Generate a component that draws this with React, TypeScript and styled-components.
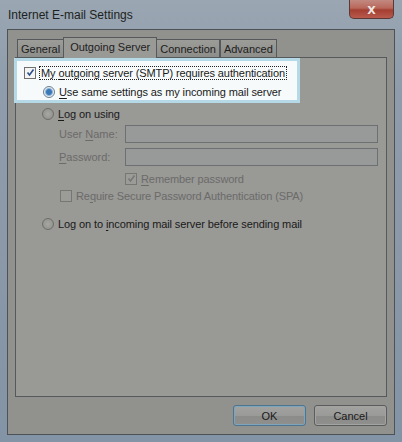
import React from "react";
import styled, { createGlobalStyle } from "styled-components";

const Global = createGlobalStyle`
  html, body { margin: 0; padding: 0; background: #8c98a6; }
  body { font-family: "Liberation Sans", Arial, sans-serif; font-size: 11px; }
`;

const Window = styled.div`
  width: 402px;
  height: 442px;
  box-sizing: border-box;
  display: flex;
  flex-direction: column;
  background: linear-gradient(180deg, #9aa6b2 0%, #8e9cab 20%, #8a98a8 60%, #8394a6 100%);
  overflow: hidden;
`;

const TitleBar = styled.div`
  height: 29px;
  display: flex;
  align-items: flex-start;
  padding-left: 8px;
  box-sizing: border-box;
`;

const Title = styled.div`
  margin-top: 8px;
  color: #1d1f22;
  font-size: 12px;
`;

const CloseButton = styled.div`
  margin-left: auto;
  margin-right: 8px;
  width: 45px;
  height: 19px;
  box-sizing: border-box;
  border: 1px solid #5b3a36;
  border-top: none;
  border-radius: 0 0 5px 5px;
  background: linear-gradient(180deg, #c28a82 0%, #b9675a 45%, #a43f32 55%, #b85a4c 100%);
  display: flex;
  align-items: center;
  justify-content: center;
  padding-top: 2px;
  color: #ebe6e1;
  font-family: "DejaVu Sans", sans-serif;
  font-weight: bold;
  font-size: 11px;
`;

const Client = styled.div`
  margin: 0 7px 7px 7px;
  flex: 1;
  border: 1px solid #4d5256;
  background: #91918e;
  display: flex;
  flex-direction: column;
  padding: 7px 7px 8px 7px;
  box-sizing: border-box;
`;

const TabStrip = styled.div`
  display: flex;
  align-items: flex-end;
  padding-left: 2px;
  height: 21px;
  position: relative;
  z-index: 1;
`;

const Tab = styled.div<{ $active?: boolean }>`
  height: ${(p) => (p.$active ? 21 : 19)}px;
  box-sizing: border-box;
  padding: 0 ${(p) => (p.$active ? 6 : 3)}px;
  margin: 0 ${(p) => (p.$active ? -1 : 0)}px;
  border: 1px solid #55595c;
  border-bottom: ${(p) => (p.$active ? "none" : "1px solid #55595c")};
  background: ${(p) => (p.$active ? "#999996" : "linear-gradient(180deg,#9c9c99,#8d8d8a)")};
  color: #1d1d1d;
  display: flex;
  align-items: center;
  position: relative;
  z-index: ${(p) => (p.$active ? 2 : 1)};
  padding-bottom: ${(p) => (p.$active ? 3 : 0)}px;
`;

const TabPanel = styled.div`
  flex: 1;
  margin-top: -1px;
  border: 1px solid #55595c;
  background: #999996;
  display: flex;
  flex-direction: column;
`;

const Highlight = styled.div`
  margin-left: -2px;
  width: 286px;
  box-sizing: border-box;
  border: 3px solid #b5d9e6;
  background: #f6fafb;
  padding: 4px 0 1px 7px;
  display: flex;
  flex-direction: column;
  gap: 4px;
  position: relative;
  z-index: 3;
`;

const Row = styled.div<{ $indent?: number; $mt?: number; $dim?: boolean }>`
  display: flex;
  align-items: center;
  height: 15px;
  margin-left: ${(p) => p.$indent ?? 0}px;
  margin-top: ${(p) => p.$mt ?? 0}px;
  color: ${(p) => (p.$dim ? "#6b6b69" : "#1a1a1a")};
  white-space: nowrap;
  letter-spacing: -0.1px;
`;

const Check = styled.span<{ $dim?: boolean }>`
  width: 12px;
  height: 12px;
  box-sizing: border-box;
  border: 1px solid ${(p) => (p.$dim ? "#767674" : "#707070")};
  background: ${(p) => (p.$dim ? "#9b9b98" : "#f4f4f4")};
  margin-right: 4px;
  display: inline-flex;
  align-items: center;
  justify-content: center;
  flex: none;
`;

const Radio = styled.span<{ $on?: boolean }>`
  width: 12px;
  height: 12px;
  box-sizing: border-box;
  border-radius: 50%;
  border: 1px solid ${(p) => (p.$on ? "#6a7f93" : "#6d6d6b")};
  background: ${(p) =>
    p.$on
      ? "radial-gradient(circle, #3a79b8 0 2.5px, #8fb4d6 3.5px, #e8eef3 4.5px)"
      : "radial-gradient(circle, #a7a7a4, #8c8c89)"};
  margin-right: 4px;
  flex: none;
`;

const Focus = styled.span`
  outline: 1px dotted #222;
  padding: 0 1px;
`;

const U = styled.span`
  text-decoration: underline;
  text-underline-offset: 2px;
`;

const Options = styled.div`
  padding-left: 26px;
  display: flex;
  flex-direction: column;
`;

const FieldRow = styled.div<{ $mt: number }>`
  display: flex;
  align-items: center;
  height: 18px;
  margin-left: 17px;
  margin-top: ${(p) => p.$mt}px;
  color: #6b6b69;
`;

const Label = styled.div`
  width: 66px;
`;

const Input = styled.div`
  width: 253px;
  height: 18px;
  box-sizing: border-box;
  border: 1px solid #6c7073;
  background: #989a99;
`;

const Spacer = styled.div`
  flex: 1;
`;

const ButtonRow = styled.div`
  display: flex;
  justify-content: flex-end;
  gap: 8px;
  margin-top: 8px;
`;

const Button = styled.div<{ $default?: boolean }>`
  width: 73px;
  height: 21px;
  box-sizing: border-box;
  border: 1px solid ${(p) => (p.$default ? "#4f7490" : "#5a5c5e")};
  border-radius: 3px;
  box-shadow: ${(p) => (p.$default ? "inset 0 0 0 1px #7fa5bb" : "inset 0 0 0 1px #a3a3a1")};
  background: linear-gradient(180deg, #a2a2a0 0%, #9a9a98 50%, #8b8b89 51%, #8f8f8d 100%);
  display: flex;
  align-items: center;
  justify-content: center;
  color: #1a1a1a;
`;

const CheckMark = ({ color }: { color: string }) => (
  <svg width="9" height="9" viewBox="0 0 9 9">
    <path d="M1.5 4.5 L3.5 7 L7.5 1.5" stroke={color} strokeWidth="1.6" fill="none" />
  </svg>
);

export default function App() {
  return (
    <>
      <Global />
      <Window>
        <TitleBar>
          <Title>Internet E-mail Settings</Title>
          <CloseButton>X</CloseButton>
        </TitleBar>
        <Client>
          <TabStrip>
            <Tab>General</Tab>
            <Tab $active>Outgoing Server</Tab>
            <Tab>Connection</Tab>
            <Tab>Advanced</Tab>
          </TabStrip>
          <TabPanel>
            <Highlight>
              <Row>
                <Check>
                  <CheckMark color="#2b4f8a" />
                </Check>
                <Focus>
                  My <U>o</U>utgoing server (SMTP) requires authentication
                </Focus>
              </Row>
              <Row $indent={19}>
                <Radio $on />
                <span>
                  <U>U</U>se same settings as my incoming mail server
                </span>
              </Row>
            </Highlight>
            <Options>
              <Row $mt={3}>
                <Radio />
                <span>
                  <U>L</U>og on using
                </span>
              </Row>
              <FieldRow $mt={4}>
                <Label>
                  User <U>N</U>ame:
                </Label>
                <Input />
              </FieldRow>
              <FieldRow $mt={5}>
                <Label>
                  <U>P</U>assword:
                </Label>
                <Input />
              </FieldRow>
              <Row $indent={83} $mt={5} $dim>
                <Check $dim>
                  <CheckMark color="#777775" />
                </Check>
                <span>
                  <U>R</U>emember password
                </span>
              </Row>
              <Row $indent={18} $mt={2} $dim>
                <Check $dim />
                <span>
                  Re<U>q</U>uire Secure Password Authentication (SPA)
                </span>
              </Row>
              <Row $mt={13}>
                <Radio />
                <span>
                  Log on to <U>i</U>ncoming mail server before sending mail
                </span>
              </Row>
            </Options>
            <Spacer />
          </TabPanel>
          <ButtonRow>
            <Button $default>OK</Button>
            <Button>Cancel</Button>
          </ButtonRow>
        </Client>
      </Window>
    </>
  );
}
